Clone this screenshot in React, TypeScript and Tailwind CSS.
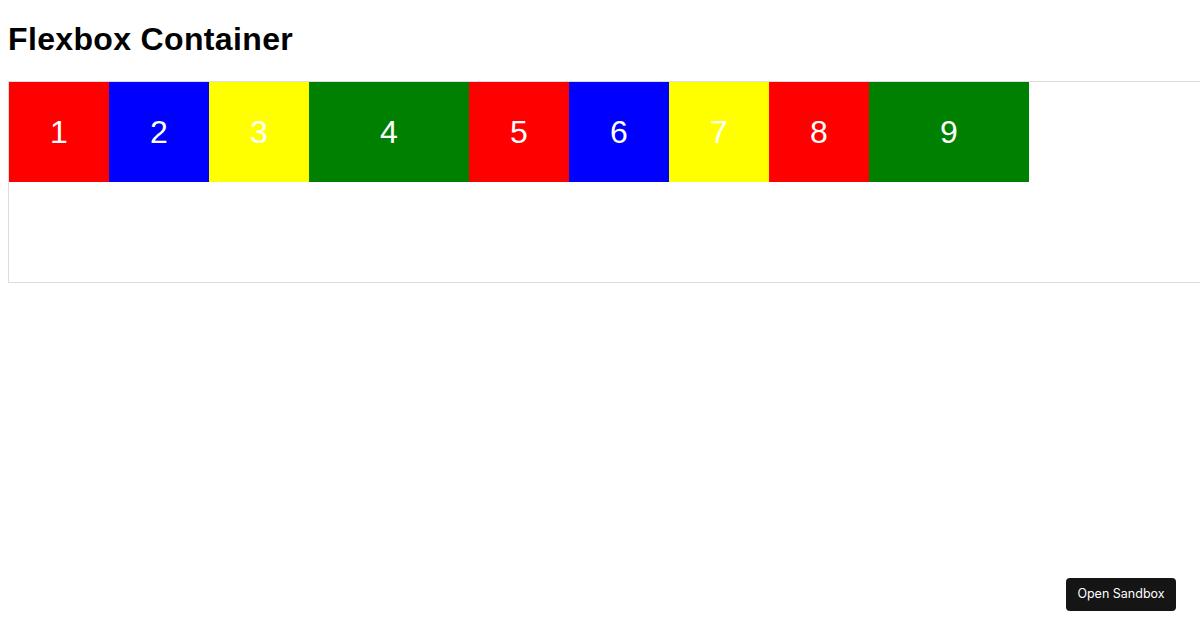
const boxes: { n: number; color: string; wide?: boolean }[] = [
  { n: 1, color: "bg-[#ff0000]" },
  { n: 2, color: "bg-[#0000ff]" },
  { n: 3, color: "bg-[#ffff00]" },
  { n: 4, color: "bg-[#008000]", wide: true },
  { n: 5, color: "bg-[#ff0000]" },
  { n: 6, color: "bg-[#0000ff]" },
  { n: 7, color: "bg-[#ffff00]" },
  { n: 8, color: "bg-[#ff0000]" },
  { n: 9, color: "bg-[#008000]", wide: true },
];

export default function App() {
  return (
    <div className="relative w-[1200px] h-[630px] overflow-hidden bg-white font-['Liberation_Sans',Arial,sans-serif]">
      <div className="px-2 pt-[21px]">
        <h1 className="text-[32px] font-bold leading-[37px] tracking-[0.35px] text-black">Flexbox Container</h1>
        <div className="mt-[23px] w-[1200px] h-[202px] border border-[#dddddd] flex items-start">
          {boxes.map((b) => (
            <div
              key={b.n}
              className={`${b.color} ${b.wide ? "w-[160px]" : "w-[100px]"} h-[100px] shrink-0 flex items-center justify-center text-white text-[32px]`}
            >
              {b.n}
            </div>
          ))}
        </div>
      </div>
      <button className="absolute right-[24px] bottom-[19px] w-[110px] h-[33px] rounded-[4px] bg-[#151515] text-white text-[12.5px] font-['Inter',sans-serif]">
        Open Sandbox
      </button>
    </div>
  );
}
